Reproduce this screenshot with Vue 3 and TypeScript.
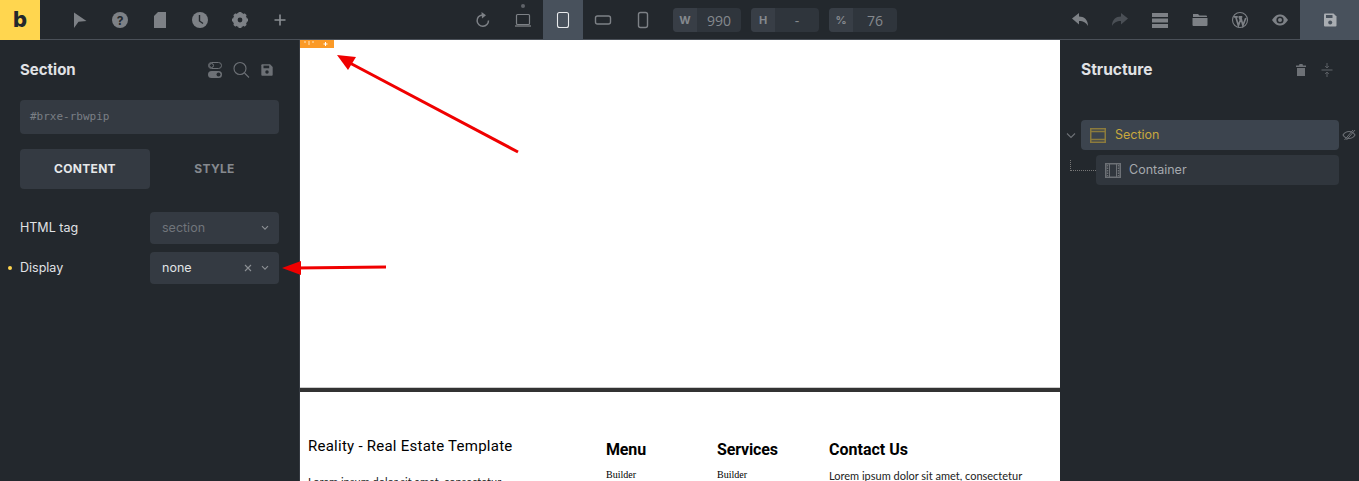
<script setup lang="ts">
const footerColumns = [
  { title: 'Menu', item: 'Builder' },
  { title: 'Services', item: 'Builder' },
]
</script>

<template>
  <div class="app">
    <header class="topbar">
      <div class="top-left">
        <div class="logo">b</div>
        <div class="icons first">
          <span class="ic"><svg width="20" height="20" viewBox="0 0 20 20"><path d="M4 2.500 L16.500 11 L8.500 11.800 L4 18 Z" fill="#7d8186"/></svg></span>
          <span class="ic"><svg width="20" height="20" viewBox="0 0 20 20"><circle cx="10" cy="10" r="8" fill="#7d8186"/><text x="10" y="14.500" class="q">?</text></svg></span>
          <span class="ic"><svg width="20" height="20" viewBox="0 0 20 20"><path d="M8 2 H16 V18 H4 V6 Z" fill="#7d8186"/></svg></span>
          <span class="ic"><svg width="20" height="20" viewBox="0 0 20 20"><circle cx="10" cy="10" r="8" fill="#7d8186"/><path d="M9.500 5 V11 L13 13.500" fill="none" stroke="#23282d" stroke-width="1.400"/></svg></span>
          <span class="ic"><svg width="20" height="20" viewBox="0 0 20 20"><path d="M10 4.800 A5.200 5.200 0 1 0 10 15.200 A5.200 5.200 0 1 0 10 4.800 Z" fill="none" stroke="#7d8186" stroke-width="4"/><path d="M10 2 V18 M2 10 H18 M4.300 4.300 L15.700 15.700 M15.700 4.300 L4.300 15.700" stroke="#7d8186" stroke-width="3"/><circle cx="10" cy="10" r="2.400" fill="#23282d"/></svg></span>
          <span class="ic"><svg width="20" height="20" viewBox="0 0 20 20"><path d="M10 4.500 V15.500 M4.500 10 H15.500" stroke="#8a8e93" stroke-width="1.600"/></svg></span>
        </div>
      </div>
      <div class="top-center">
        <span class="ic"><svg width="20" height="20" viewBox="0 0 20 20"><path d="M15.500 10.500 A5.700 5.700 0 1 1 9.300 4.900" fill="none" stroke="#7d8186" stroke-width="1.500"/><path d="M8.500 2 L13 5.200 L9 8.500 Z" fill="#7d8186"/></svg></span>
        <span class="ic dot-ic"><i class="dot"></i><svg width="20" height="20" viewBox="0 0 20 20"><rect x="3.500" y="4.500" width="13" height="10" rx="1" fill="none" stroke="#7d8186" stroke-width="1.200"/><path d="M2 16 H18" stroke="#7d8186" stroke-width="1.300"/></svg></span>
        <span class="ic active"><svg width="20" height="20" viewBox="0 0 20 20"><rect x="4.500" y="2.500" width="11" height="15" rx="2" fill="none" stroke="#e8eaec" stroke-width="1.100"/></svg></span>
        <span class="ic"><svg width="20" height="20" viewBox="0 0 20 20"><rect x="2.500" y="6" width="15" height="8" rx="2" fill="none" stroke="#7d8186" stroke-width="1.400"/></svg></span>
        <span class="ic"><svg width="20" height="20" viewBox="0 0 20 20"><rect x="5.500" y="2.500" width="9" height="15" rx="2" fill="none" stroke="#7d8186" stroke-width="1.400"/></svg></span>
        <div class="dims">
          <div class="dim"><b>W</b><span>990</span></div>
          <div class="dim"><b>H</b><span>-</span></div>
          <div class="dim"><b>%</b><span>76</span></div>
        </div>
      </div>
      <div class="top-right">
        <span class="ic"><svg width="20" height="20" viewBox="0 0 20 20"><path d="M2 8.500 L9 3 V6.500 C14 6.500 18 9.500 18 16 C16 12.500 13.500 11 9 11 V14.500 Z" fill="#7d8186"/></svg></span>
        <span class="ic"><svg width="20" height="20" viewBox="0 0 20 20"><path d="M18 8.500 L11 3 V6.500 C6 6.500 2 9.500 2 16 C4 12.500 6.500 11 11 11 V14.500 Z" fill="#4a4f55"/></svg></span>
        <span class="ic"><svg width="20" height="20" viewBox="0 0 20 20"><path d="M2 3 H18 V7 H2 Z M2 8.500 H18 V12.500 H2 Z M2 14 H18 V18 H2 Z" fill="#7d8186"/></svg></span>
        <span class="ic"><svg width="20" height="20" viewBox="0 0 20 20"><path d="M3 4 H8 L9.500 5.500 H16 Q17 5.500 17 6.500 V7 H3 Z M2.500 8 H17.500 V15 Q17.500 16 16.500 16 H3.500 Q2.500 16 2.500 15 Z" fill="#7d8186"/></svg></span>
        <span class="ic"><svg width="20" height="20" viewBox="0 0 20 20"><circle cx="10" cy="10" r="7.500" fill="none" stroke="#7d8186" stroke-width="1.100"/><path d="M4 6.800 H7.800 M5.800 7 L8.400 15.500 L10.400 10 L9.200 7 M8.500 6.800 H12.300 M10.700 7 L12.900 15.500 L15.800 8" fill="none" stroke="#7d8186" stroke-width="1.700"/></svg></span>
        <span class="ic"><svg width="20" height="20" viewBox="0 0 20 20"><path d="M2 10 C5 5.500 7.500 4.500 10 4.500 C12.500 4.500 15 5.500 18 10 C15 14.500 12.500 15.500 10 15.500 C7.500 15.500 5 14.500 2 10 Z" fill="#7d8186"/><circle cx="10" cy="10" r="3.600" fill="#23282d"/><circle cx="10" cy="10" r="2" fill="#7d8186"/></svg></span>
        <span class="save"><svg width="16" height="16" viewBox="0 0 16 16"><path d="M2 2.500 Q2 1.500 3 1.500 H11.500 L14.500 4.500 V13.500 Q14.500 14.500 13.500 14.500 H3 Q2 14.500 2 13.500 Z" fill="#a9adb2"/><rect x="4" y="3" width="6.500" height="3" fill="#48515c"/><circle cx="8.200" cy="10.500" r="2" fill="#48515c"/></svg></span>
      </div>
    </header>

    <main class="workspace">
      <aside class="panel left">
        <div class="panel-head">
          <h2>Section</h2>
          <div class="head-icons">
            <svg width="16" height="18" viewBox="0 0 16 18"><rect x="1.500" y="1.500" width="13" height="6" rx="3" fill="none" stroke="#6d7176"/><circle cx="4.500" cy="4.500" r="2" fill="none" stroke="#6d7176"/><rect x="1" y="10" width="14" height="7" rx="3.500" fill="#6d7176"/><circle cx="11.500" cy="13.500" r="2" fill="#23282d"/></svg>
            <svg width="17" height="18" viewBox="0 0 17 18"><circle cx="7" cy="7.500" r="6" fill="none" stroke="#6d7176" stroke-width="1.100"/><path d="M11.500 12 L16 16.500" stroke="#6d7176" stroke-width="1.100"/></svg>
            <svg width="14" height="14" viewBox="0 0 16 16"><path d="M1.500 2.500 Q1.500 1.500 2.500 1.500 H11.500 L14.500 4.500 V13.500 Q14.500 14.500 13.500 14.500 H2.500 Q1.500 14.500 1.500 13.500 Z" fill="#6d7176"/><rect x="4" y="3" width="6.500" height="3" fill="#23282d"/><circle cx="8" cy="10.300" r="2" fill="#23282d"/></svg>
          </div>
        </div>
        <div class="id-input">#brxe-rbwpip</div>
        <div class="tabs">
          <div class="tab on">CONTENT</div>
          <div class="tab">STYLE</div>
        </div>
        <div class="control">
          <label>HTML tag</label>
          <div class="select muted">
            <span>section</span>
            <svg class="chev" width="8" height="6" viewBox="0 0 8 6"><path d="M1 1.200 L4 4.200 L7 1.200" fill="none" stroke="#8b8f94" stroke-width="1.100"/></svg>
          </div>
        </div>
        <div class="control">
          <label class="set">Display</label>
          <div class="select">
            <span>none</span>
            <svg class="clear" width="8" height="8" viewBox="0 0 8 8"><path d="M1 1 L7 7 M7 1 L1 7" stroke="#8b8f94" stroke-width="1.100"/></svg>
            <svg class="chev near" width="8" height="6" viewBox="0 0 8 6"><path d="M1 1.200 L4 4.200 L7 1.200" fill="none" stroke="#8b8f94" stroke-width="1.100"/></svg>
          </div>
        </div>
      </aside>

      <section class="canvas">
        <div class="blank">
          <div class="el-bar">
            <svg width="17" height="8" viewBox="0 0 17 8"><path d="M5 1 V3 M9 1 V5 M13 1 V3" stroke="#ffe3bd"/></svg>
            <svg width="17" height="8" viewBox="0 0 17 8"><path d="M8.500 2 V6 M6.500 4 H10.500" stroke="#fff"/></svg>
          </div>
        </div>
        <div class="footer">
          <div class="f-brand">
            <h3>Reality - Real Estate Template</h3>
            <p>Lorem ipsum dolor sit amet, consectetur</p>
          </div>
          <div v-for="col in footerColumns" :key="col.title" class="f-col">
            <h4>{{ col.title }}</h4>
            <a>{{ col.item }}</a>
          </div>
          <div class="f-contact">
            <h4>Contact Us</h4>
            <p>Lorem ipsum dolor sit amet, consectetur</p>
          </div>
        </div>
      </section>

      <aside class="panel right">
        <div class="panel-head r">
          <h2>Structure</h2>
          <div class="head-icons r">
            <svg width="14" height="14" viewBox="0 0 14 14"><path d="M2 2.500 H5 L5.500 1 H8.500 L9 2.500 H12 V4 H2 Z M3 5 H11 V13 H3 Z" fill="#6d7176"/></svg>
            <svg width="14" height="16" viewBox="0 0 14 16"><path d="M1.500 8 H12.500" stroke="#5b5f64" stroke-width="1.100"/><path d="M7 1 V5.500 M5.200 4 L7 6 L8.800 4 M7 15 V10.500 M5.200 12 L7 10 L8.800 12" fill="none" stroke="#5b5f64"/></svg>
          </div>
        </div>
        <div class="tree">
          <div class="tree-row">
            <svg class="tree-chev" width="10" height="7" viewBox="0 0 10 7"><path d="M1 1.500 L5 5.500 L9 1.500" fill="none" stroke="#6d7176" stroke-width="1.100"/></svg>
            <div class="node sec">
              <svg width="16" height="15" viewBox="0 0 16 15"><rect x="0.750" y="0.750" width="14.500" height="13.500" fill="none" stroke="#8c7b3c" stroke-width="1.500"/><path d="M1 3.500 H15 M1 11.500 H15" stroke="#8c7b3c" stroke-width="1.500"/></svg>
              <span>Section</span>
            </div>
            <svg class="eye" width="14" height="12" viewBox="0 0 14 12"><path d="M1 6 C3 3 5 2.500 7 2.500 C9 2.500 11 3 13 6 C11 9 9 9.500 7 9.500 C5 9.500 3 9 1 6 Z" fill="none" stroke="#6d7176" stroke-width="1.100"/><path d="M2.500 11 L11 1 M4.500 11 L13 1" stroke="#6d7176"/></svg>
          </div>
          <div class="tree-row child">
            <i class="link"></i>
            <div class="node">
              <svg width="16" height="15" viewBox="0 0 16 15"><rect x="0.750" y="0.750" width="14.500" height="13.500" fill="none" stroke="#6d7176" stroke-width="1.500"/><path d="M4.500 1 V14 M11.500 1 V14" stroke="#6d7176"/><path d="M2.500 2 V13 M13.500 2 V13" stroke="#6d7176" stroke-width="1.500" stroke-dasharray="1.500 1"/></svg>
              <span>Container</span>
            </div>
          </div>
        </div>
      </aside>

      <svg class="arrows" width="1359" height="441" viewBox="0 0 1359 441">
        <path d="M518 112 L348 22" stroke="#f00000" stroke-width="3"/>
        <path d="M337 15 L356 17 L348 30 Z" fill="#f00000"/>
        <path d="M386 227 L296 228" stroke="#f00000" stroke-width="3"/>
        <path d="M282 228 L301 221 L301 235 Z" fill="#f00000"/>
      </svg>
    </main>
  </div>
</template>

<style>
html, body { margin: 0; background: #23282d; overflow: hidden; }
</style>

<style scoped>
.app {
  width: 1359px;
  height: 481px;
  overflow: hidden;
  background: #23282d;
  font-family: Inter, "Liberation Sans", sans-serif;
}
.topbar {
  display: grid;
  grid-template-columns: 300px 760px 299px;
  height: 39px;
  border-bottom: 1px solid #4a5058;
  box-sizing: content-box;
}
.top-left, .top-right, .top-center, .icons, .dims, .dim { display: flex; align-items: center; }
.logo {
  width: 40px;
  height: 40px;
  background: #ffd64f;
  color: #23282d;
  font: 800 22px/38px Inter, sans-serif;
  text-align: center;
  z-index: 1;
}
.icons.first { margin-left: 20px; }
.ic {
  width: 40px;
  height: 40px;
  display: flex;
  align-items: center;
  justify-content: center;
  flex: none;
  position: relative;
}
.ic.active { background: #48515c; }
.dot-ic .dot {
  position: absolute;
  top: 4px;
  left: 18px;
  width: 4px;
  height: 4px;
  border-radius: 50%;
  background: #5f6368;
}
.top-center { padding-left: 163px; }
.dims { gap: 10px; margin-left: 10px; }
.dim {
  width: 68px;
  height: 24px;
  border-radius: 4px;
  background: #2f353c;
  overflow: hidden;
  color: #85898e;
  font: 14px "Open Sans", sans-serif;
}
.dim b {
  width: 24px;
  height: 24px;
  background: #383e46;
  font: 700 11px/24px Inter, sans-serif;
  text-align: center;
}
.dim span { flex: 1; text-align: center; }
.save {
  width: 59px;
  height: 40px;
  background: #48515c;
  display: flex;
  align-items: center;
  justify-content: center;
  flex: none;
}
.workspace {
  position: relative;
  display: grid;
  grid-template-columns: 300px 760px 299px;
  height: 441px;
}
.panel { box-sizing: border-box; }
.panel.left { padding: 0 20px; border-right: 1px solid #353a41; }
.panel-head { display: flex; align-items: center; justify-content: space-between; height: 60px; }
.panel-head h2 {
  margin: 0;
  color: #e0e2e5;
  font: 700 15px/60px Inter, sans-serif;
}
.head-icons { display: flex; align-items: center; gap: 10px; padding-right: 5px; }
.id-input {
  height: 34px;
  padding-left: 10px;
  border-radius: 4px;
  background: #343a42;
  color: #7a7f85;
  font: 11px/34px "DejaVu Sans Mono", monospace;
}
.tabs { display: flex; margin: 15px 0 23px; }
.tab {
  width: 130px;
  height: 40px;
  border-radius: 4px;
  color: #85898e;
  font: 700 12px/40px Inter, sans-serif;
  text-align: center;
  letter-spacing: 0.3px;
}
.tab:last-child { width: 129px; }
.tab.on { background: #343a42; color: #e6e8ea; }
.control { display: flex; align-items: center; height: 32px; margin-bottom: 8px; }
.control label {
  position: relative;
  width: 130px;
  padding-bottom: 2px;
  color: #e0e2e5;
  font-size: 12.5px;
}
.control label.set::before {
  content: "";
  position: absolute;
  left: -12px;
  top: 6px;
  width: 4px;
  height: 4px;
  border-radius: 50%;
  background: #ffd64f;
}
.select {
  display: flex;
  align-items: center;
  width: 129px;
  height: 32px;
  padding: 0 10px 0 12px;
  box-sizing: border-box;
  border-radius: 4px;
  background: #343a42;
  color: #e0e2e5;
  font-size: 12.5px;
}
.select span { flex: 1; padding-bottom: 2px; }
.select.muted { color: #70757b; }
.clear { margin-right: 9px; }
.canvas { width: 760px; height: 441px; overflow: hidden; background: #fff; }
.blank { position: relative; height: 348px; border-bottom: 4px solid #333; box-shadow: inset 0 -1px #ccc; }
.el-bar {
  position: absolute;
  left: 0;
  top: 0;
  display: flex;
  width: 34px;
  height: 8px;
  background: #fb9a27;
}
.footer {
  display: grid;
  grid-template-columns: 298px 111px 112px 1fr;
  padding: 44px 0 0 8px;
  color: #000;
  font-family: Lato, sans-serif;
}
.f-brand h3 { margin: 0 0 17px; font: 400 15px/20px Roboto, sans-serif; letter-spacing: 0.25px; }
.f-brand p { margin: 0; font-size: 11px; line-height: 17px; color: #222; }
.f-contact p { margin: 0; font-size: 11px; line-height: 17px; color: #222; }
.f-col h4, .f-contact h4 { margin: 3px 0 6px; font: 700 16px/22px Roboto, sans-serif; }
.f-col h4 { letter-spacing: -0.15px; }
.f-col a { display: block; font: 10px/16px "Liberation Serif", serif; }
.panel.right { padding-left: 21px; }
.panel-head.r { padding-right: 20px; }
.head-icons.r { gap: 12px; padding-right: 5px; }
.panel-head.r h2 { font-size: 15.5px; line-height: 58px; margin-bottom: 1px; }
.tree { margin-top: 20px; }
.tree-row { position: relative; height: 30px; margin-bottom: 5px; padding-right: 20px; }
.node {
  display: flex;
  align-items: center;
  gap: 9px;
  height: 30px;
  padding-left: 9px;
  border-radius: 4px;
  background: #30363d;
  color: #a5a9ad;
  font-size: 12.5px;
  line-height: 28px;
}
.node.sec { background: #3c444e; color: #c8a83e; }
.child .node { gap: 8px; }
.tree-chev { position: absolute; left: -15px; top: 12px; }
.eye { position: absolute; right: 3px; top: 9px; }
.tree-row.child { padding-left: 15px; }
.link {
  position: absolute;
  left: -11px;
  top: 5px;
  width: 25px;
  height: 10px;
  border-left: 1px dotted #777;
  border-bottom: 1px dotted #777;
}
.arrows { position: absolute; left: 0; top: 0; pointer-events: none; }
.q { fill: #23282d; font: 700 12px Inter, sans-serif; text-anchor: middle; }
</style>
